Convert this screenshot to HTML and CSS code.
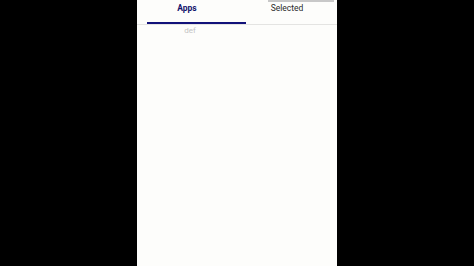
FILE: index.html
```html
<!DOCTYPE html>
<html>
<head>
<meta charset="utf-8">
<link rel="stylesheet" href="styles.css">
</head>
<body>
<div class="screen">
  <div class="status"><div class="status-bar"></div></div>
  <div class="tabs">
    <div class="tab active">Apps</div>
    <div class="tab">Selected</div>
  </div>
  <div class="indicator-row"><div class="indicator"></div></div>
  <div class="divider"></div>
  <div class="list">
    <div class="item">def</div>
  </div>
</div>
</body>
</html>
```
FILE: styles.css
```css
html, body { margin: 0; padding: 0; background: #000; height: 266px; overflow: hidden; }
body { display: flex; }
.screen {
  margin-left: 137px;
  width: 200px;
  height: 266px;
  background: #fdfdfb;
  display: flex;
  flex-direction: column;
  font-family: Roboto, "Liberation Sans", sans-serif;
}
.status { height: 2px; display: flex; justify-content: flex-end; padding-right: 3px; }
.status-bar { width: 66px; height: 2px; background: #c8c8c8; }
.tabs { display: flex; height: 20px; }
.tab {
  flex: 1;
  text-align: center;
  font-size: 8.5px;
  color: #2a2a2a;
  padding-top: 1px;
  line-height: 10px;
}
.tab.active { color: #13136b; font-weight: bold; }
.indicator-row { height: 2px; padding-left: 10px; }
.indicator { width: 99px; height: 2px; background: #12127a; }
.divider { height: 1px; background: #e4e4e2; }
.list { display: flex; flex-direction: column; }
.item {
  text-align: center;
  width: 106px;
  font-size: 8px;
  color: #c4c4c4;
  padding-top: 1px;
  line-height: 10px;
}
```
